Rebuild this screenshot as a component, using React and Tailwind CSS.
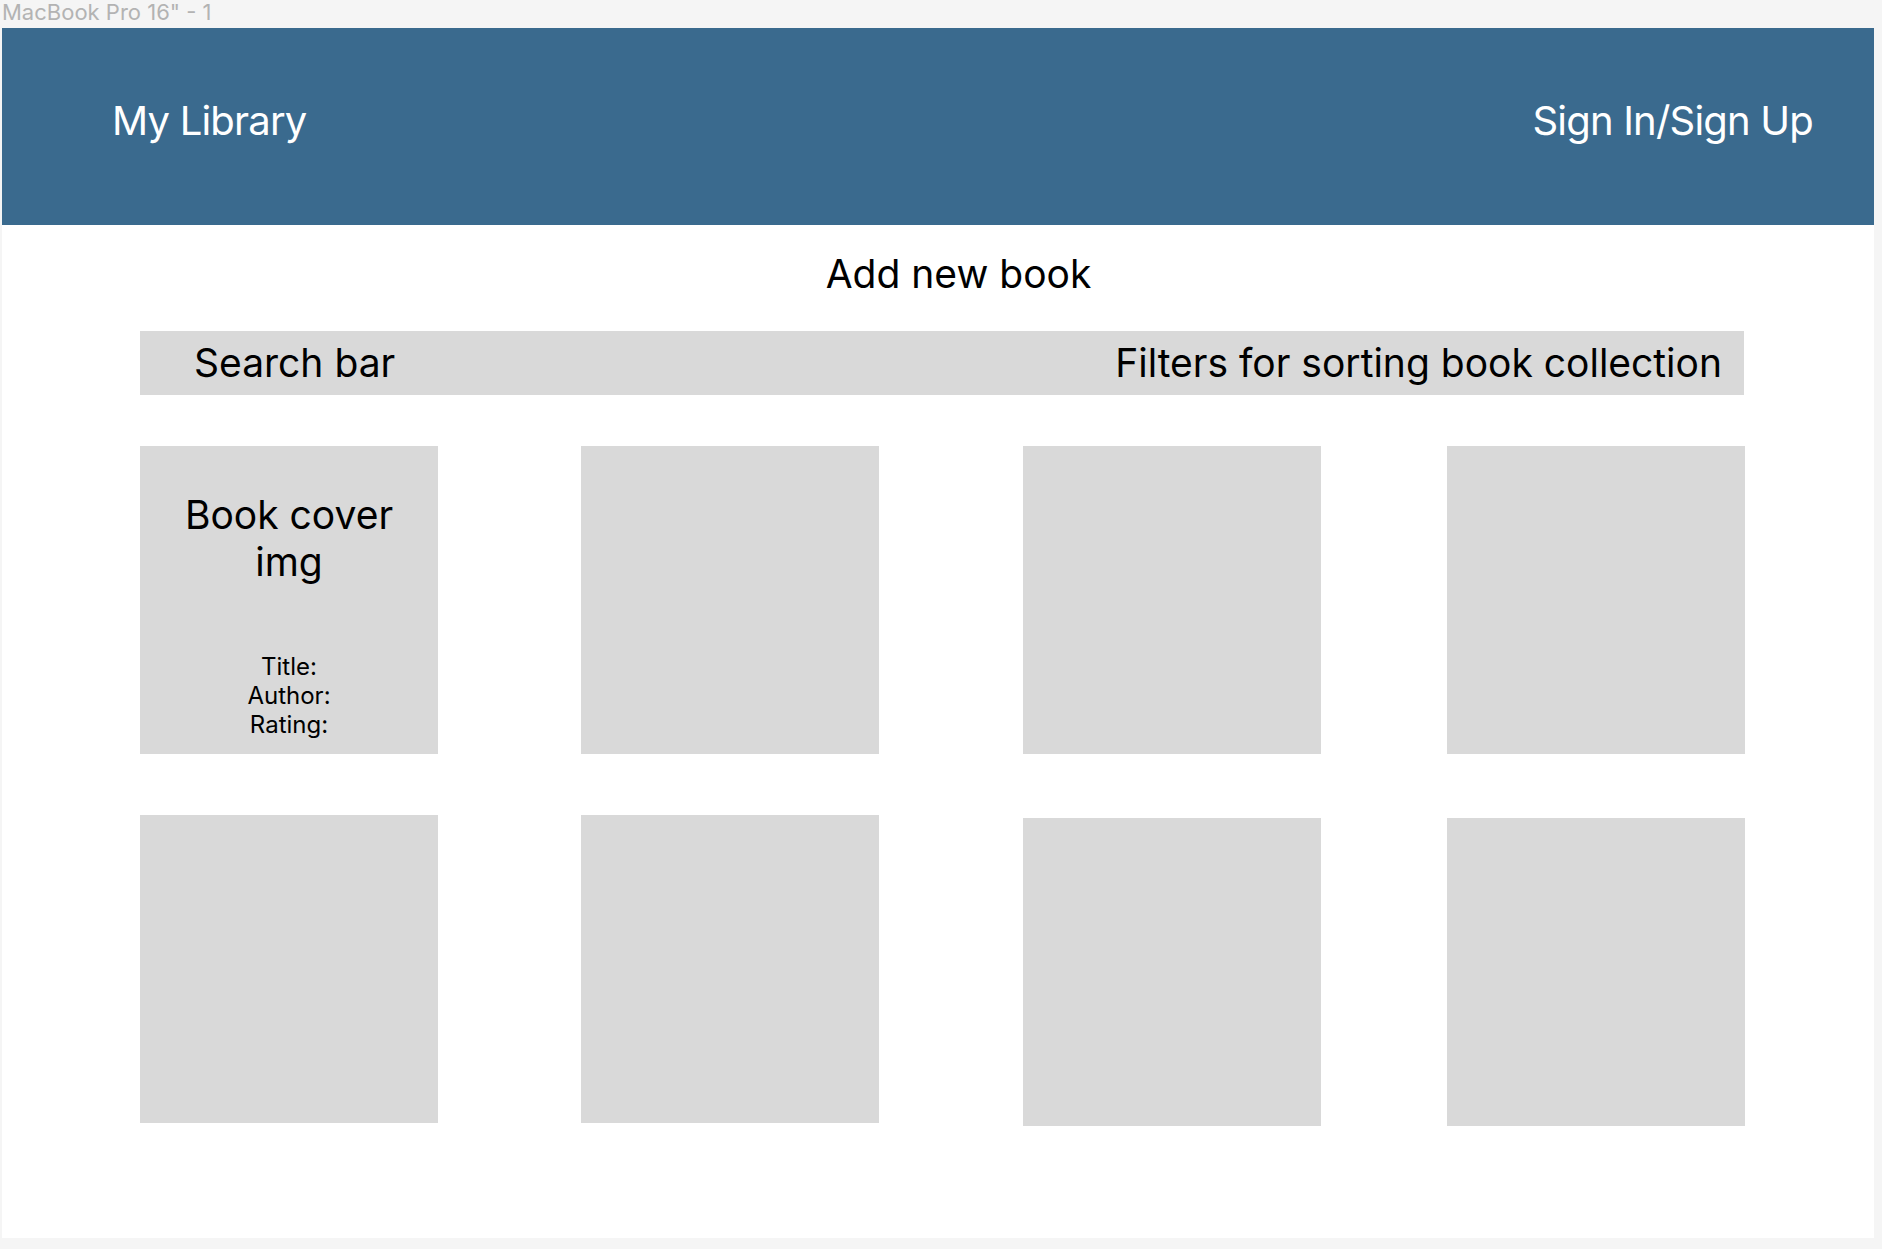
import React from "react";

const font = { fontFamily: "Inter, 'Noto Sans', sans-serif" };

const Card = ({ children, className = "" }) => (
  <div className={`w-[298px] h-[308px] bg-[#d9d9d9] shrink-0 ${className}`}>{children}</div>
);

const FirstCard = () => (
  <Card className="flex flex-col items-center text-black">
    <div className="mt-[45px] text-[39px] leading-[47px] text-center">
      <div>Book cover</div>
      <div>img</div>
    </div>
    <div className="mt-[67px] text-[24px] leading-[29px] text-center">
      <div>Title:</div>
      <div>Author:</div>
      <div>Rating:</div>
    </div>
  </Card>
);

export default function App() {
  return (
    <div className="min-h-screen w-full bg-[#f5f5f5]" style={font}>
      <div className="h-[28px] pl-[2px] text-[22px] leading-[24px] text-[#b3b3b3]">
        MacBook Pro 16" - 1
      </div>
      <div className="ml-[2px] w-[1872px] h-[1210px] bg-white flex flex-col">
        <header className="h-[197px] bg-[#3a6a8e] flex items-center justify-between pl-[110px] pr-[61px] pb-[12px] text-white text-[40px] tracking-[-0.8px]">
          <span>My Library</span>
          <span>Sign In/Sign Up</span>
        </header>

        <div className="mt-[25px] pl-[41px] flex justify-center text-[39px] leading-[47px] text-black">
          Add new book
        </div>

        <div className="mt-[34px] ml-[138px] w-[1604px] h-[64px] bg-[#d9d9d9] flex items-center justify-between pl-[54px] pr-[22px] text-[39px] text-black">
          <span>Search bar</span>
          <span>Filters for sorting book collection</span>
        </div>

        <div className="mt-[51px] ml-[138px] flex items-start">
          <FirstCard />
          <Card className="ml-[143px]" />
          <Card className="ml-[144px]" />
          <Card className="ml-[126px]" />
        </div>

        <div className="mt-[61px] ml-[138px] flex items-start">
          <Card />
          <Card className="ml-[143px]" />
          <Card className="ml-[144px] mt-[3px]" />
          <Card className="ml-[126px] mt-[3px]" />
        </div>
      </div>
    </div>
  );
}
